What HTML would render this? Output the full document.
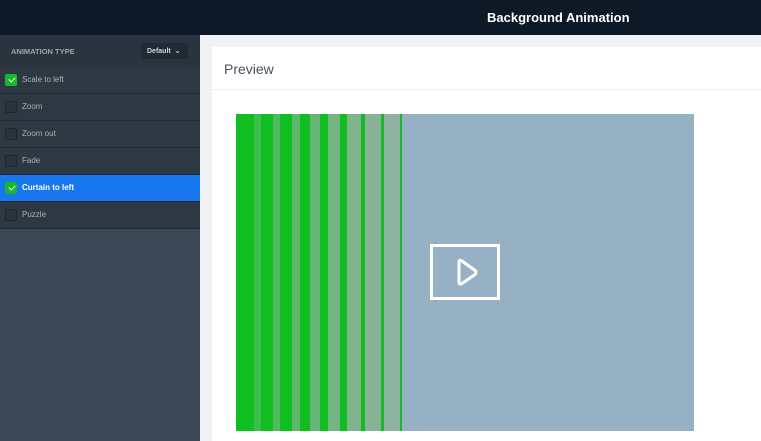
<!DOCTYPE html>
<html><head><style>
*{margin:0;padding:0;box-sizing:border-box}
body{width:761px;height:441px;overflow:hidden;font-family:"Liberation Sans",sans-serif;background:#f0f2f5;position:relative}
.top{position:absolute;left:0;top:0;width:761px;height:35px;background:#0e1927;color:#fff;font-weight:bold;font-size:13px}
.top span{position:absolute;left:487px;top:10px}
.side{position:absolute;left:0;top:35px;width:200px;height:406px;background:#3a4856}
.hdr{height:32px;background:#2a343f;position:relative;color:#9aa4ad;font-size:7.5px;font-weight:bold}
.hdr .t{position:absolute;left:11px;top:12px}
.hdr .d{position:absolute;left:141px;top:8px;width:47px;height:16px;background:#1f2a35;color:#cfd5da;font-size:7px;padding:4px 0 0 6px;border-radius:2px}
.it{height:27px;background:#2d3843;border-bottom:1px solid #202a34;position:relative;color:#aab3bb;font-size:8px}
.it .cb{position:absolute;left:5px;top:7px;width:12px;height:12px;border:1px solid #1d262f;background:#2a343e;border-radius:2px}
.it .cb.on{background:#18b72c;border-color:#18b72c}
.it .cb.on:after{content:"";position:absolute;left:3px;top:2px;width:5px;height:3px;border-left:1.5px solid #fff;border-bottom:1.5px solid #fff;transform:rotate(-45deg)}
.it span{position:absolute;left:22px;top:8px}
.it.sel{background:#1877ee;color:#fff;font-weight:bold}
.card{position:absolute;left:212px;top:47px;width:549px;height:394px;background:#fff}
.card .h{height:43px;border-bottom:1px solid #eceef0;font-size:14px;color:#4a535c;padding:14px 0 0 12px}
.vid{position:absolute;left:236px;top:114px;width:458px;height:317px;background:#95b1c3}
.stripes{position:absolute;left:0;top:0;width:166px;height:100%}
.play{position:absolute;left:194px;top:130px;width:70px;height:56px;border:3px solid #fff}
</style></head><body>
<div class="top"><span>Background Animation</span></div>
<div class="side">
<div class="hdr"><span class="t">ANIMATION TYPE</span><span class="d">Default &nbsp;⌄</span></div>
<div class="it"><div class="cb on"></div><span>Scale to left</span></div>
<div class="it"><div class="cb"></div><span>Zoom</span></div>
<div class="it"><div class="cb"></div><span>Zoom out</span></div>
<div class="it"><div class="cb"></div><span>Fade</span></div>
<div class="it sel"><div class="cb on"></div><span>Curtain to left</span></div>
<div class="it"><div class="cb"></div><span>Puzzle</span></div>
</div>
<div class="card"><div class="h">Preview</div></div>
<div class="vid">
<svg class="stripes" width="166" height="317">
<rect x="0" y="0" width="166" height="317" fill="#7cb48a"/>
<rect x="0" width="18" height="317" fill="#10be22"/>
<rect x="18" width="7" height="317" fill="#3fbc4e"/>
<rect x="25" width="12" height="317" fill="#10be22"/>
<rect x="37" width="7" height="317" fill="#4fba5e"/>
<rect x="44" width="12" height="317" fill="#10be22"/>
<rect x="56" width="8" height="317" fill="#5db86b"/>
<rect x="64" width="10" height="317" fill="#10be22"/>
<rect x="74" width="10" height="317" fill="#68b675"/>
<rect x="84" width="8" height="317" fill="#10be22"/>
<rect x="92" width="12" height="317" fill="#74b581"/>
<rect x="104" width="7" height="317" fill="#10be22"/>
<rect x="111" width="14" height="317" fill="#80b48c"/>
<rect x="125" width="4" height="317" fill="#12bb25"/>
<rect x="129" width="16" height="317" fill="#88b296"/>
<rect x="145" width="3" height="317" fill="#18b82a"/>
<rect x="148" width="16" height="317" fill="#8eb2a0"/>
<rect x="164" width="2" height="317" fill="#1cb52e"/>
</svg>
<div class="play"><svg width="64" height="50" style="position:absolute;left:0;top:0"><path d="M26 15 L26 35 Q26 38 29 36.5 L42 27.5 Q44 25 42 23.5 L29 14 Q26 12 26 15 Z" fill="none" stroke="#fff" stroke-width="3" stroke-linejoin="round"/></svg></div>
</div>
</body></html>
